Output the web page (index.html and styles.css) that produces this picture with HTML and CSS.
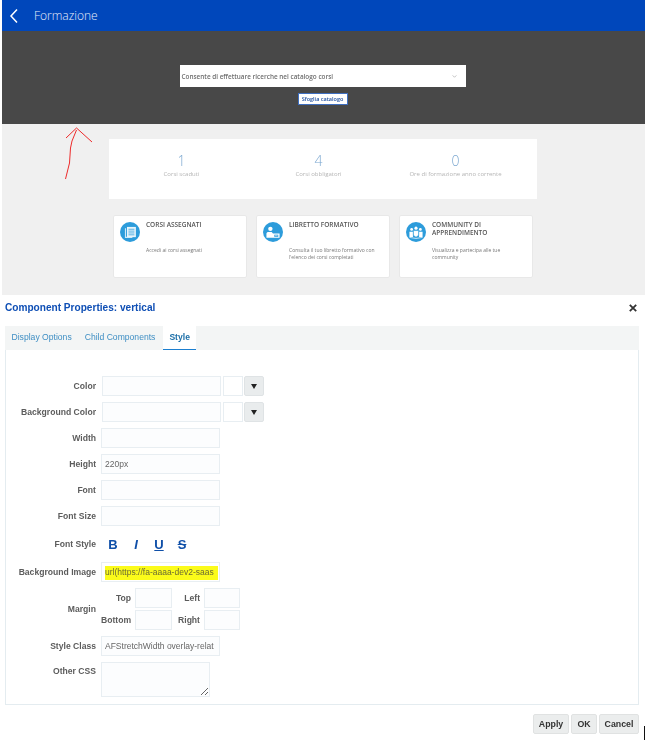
FILE: index.html
```html
<!DOCTYPE html>
<html lang="en">
<head>
  <meta charset="UTF-8">
  <title>Formazione - Component Properties</title>
  <meta name="viewport" content="width=device-width, initial-scale=1.0">
  <link rel="stylesheet" href="styles.css">
</head>
<body>
  <div class="page">
    <header class="topbar">
      <svg class="back" width="10" height="16" viewBox="0 0 10 16"><path d="M8 1.5 2 8l6 6.5" fill="none" stroke="#fff" stroke-width="1.5"/></svg>
      <span class="topbar-title">Formazione</span>
    </header>

    <section class="hero">
      <div class="search">
        <span>Consente di effettuare ricerche nel catalogo corsi</span>
        <svg width="5" height="3" viewBox="0 0 6 4"><path d="M.5.5 3 3 5.5.5" fill="none" stroke="#9a9a9a" stroke-width=".8"/></svg>
      </div>
      <button class="browse">Sfoglia catalogo</button>
    </section>

    <section class="home">
      <div class="stats">
        <div class="stat"><div class="stat-num">1</div><div class="stat-label">Corsi scaduti</div></div>
        <div class="stat"><div class="stat-num">4</div><div class="stat-label">Corsi obbligatori</div></div>
        <div class="stat"><div class="stat-num">0</div><div class="stat-label">Ore di formazione anno corrente</div></div>
      </div>
      <div class="tiles">
        <div class="tile">
          <div class="tile-icon">
            <svg width="13" height="13" viewBox="0 0 14 14"><path d="M1 2.500h1.200v9H9V13H1z" fill="#cfe8f7"/><rect x="3.200" y="1" width="9.600" height="11" fill="#e8f5fc"/><path d="M4.800 3.500h6.400M4.800 5.500h6.400M4.800 7.500h6.400M4.800 9.500h6.400" stroke="#2d9cdb" stroke-width=".8"/></svg>
          </div>
          <div>
            <h3>CORSI ASSEGNATI</h3>
            <p>Accedi ai corsi assegnati</p>
          </div>
        </div>
        <div class="tile">
          <div class="tile-icon">
            <svg width="14" height="13" viewBox="0 0 16 14"><circle cx="5" cy="2.800" r="2.500" fill="#fff"/><path d="M.5 13V8.500C.5 7 1.500 6.300 3 6.300h3.500L8 8h7.500v5z" fill="#fff"/><path d="M9.500 9.500H14V12H9.500z" fill="#2d9cdb"/><path d="M10.300 10.700h3" stroke="#fff" stroke-width=".7"/></svg>
          </div>
          <div>
            <h3>LIBRETTO FORMATIVO</h3>
            <p>Consulta il tuo libretto formativo con l'elenco dei corsi completati</p>
          </div>
        </div>
        <div class="tile">
          <div class="tile-icon">
            <svg width="14" height="13" viewBox="0 0 16 14"><circle cx="8" cy="2" r="1.800" fill="#fff"/><circle cx="3" cy="3.500" r="1.600" fill="#fff"/><circle cx="13" cy="3.500" r="1.600" fill="#fff"/><path d="M.5 6h4v6h-4zM11.500 6h4v6h-4z" fill="#fff"/><path d="M5 4.800h6v5.400l-3 2.300-3-2.300z" fill="#fff" stroke="#2d9cdb" stroke-width=".7"/><path d="M.5 12.600 8 13.800l7.500-1.200" fill="none" stroke="#fff" stroke-width=".8"/></svg>
          </div>
          <div>
            <h3>COMMUNITY DI APPRENDIMENTO</h3>
            <p>Visualizza e partecipa alle tue community</p>
          </div>
        </div>
      </div>
    </section>

    <section class="dialog">
      <div class="dialog-head">
        <h2>Component Properties: vertical</h2>
        <svg class="close" width="8" height="8" viewBox="0 0 8 8"><path d="M.8.800l6.400 6.400M7.200.800.8 7.200" stroke="#333" stroke-width="1.800"/></svg>
      </div>

      <nav class="tabs">
        <span class="tab">Display Options</span>
        <span class="tab">Child Components</span>
        <span class="tab tab-active">Style</span>
      </nav>

      <div class="panel">
        <div class="row row-color">
          <label>Color</label>
          <input class="field" type="text">
          <span class="swatch"></span>
          <span class="drop"><i></i></span>
        </div>
        <div class="row row-color">
          <label>Background Color</label>
          <input class="field" type="text">
          <span class="swatch"></span>
          <span class="drop"><i></i></span>
        </div>
        <div class="row"><label>Width</label><input class="field" type="text"></div>
        <div class="row"><label>Height</label><input class="field" type="text" value="220px"></div>
        <div class="row"><label>Font</label><input class="field" type="text"></div>
        <div class="row"><label>Font Size</label><input class="field" type="text"></div>
        <div class="row row-style">
          <label>Font Style</label>
          <div class="styles">
            <b class="st">B</b>
            <i class="st">I</i>
            <u class="st">U</u>
            <s class="st">S</s>
          </div>
        </div>
        <div class="row">
          <label>Background Image</label>
          <input class="field field-mark" type="text" value="url(https://fa-aaaa-dev2-saas">
        </div>
        <div class="row row-margin">
          <label>Margin</label>
          <div class="margins">
            <span class="m-label">Top</span><input class="small" type="text">
            <span class="m-label">Left</span><input class="small" type="text">
            <span class="m-label">Bottom</span><input class="small" type="text">
            <span class="m-label">Right</span><input class="small" type="text">
          </div>
        </div>
        <div class="row"><label>Style Class</label><input class="field" type="text" value="AFStretchWidth overlay-relat"></div>
        <div class="row row-area">
          <label>Other CSS</label>
          <textarea class="area"></textarea>
        </div>
      </div>

      <div class="actions">
        <button class="btn btn-apply">Apply</button>
        <button class="btn btn-ok">OK</button>
        <button class="btn btn-cancel">Cancel</button>
      </div>
    </section>
  </div>

  <!-- red pen arrow drawn over the screenshot -->
  <svg class="arrow" width="40" height="60" viewBox="0 0 40 60"><path d="M14.500 4 10 15 8.500 22 7.500 37 3.500 53M4 12 14.500 2 30 16" fill="none" stroke="#ee2b2b" stroke-width="1"/></svg>
  <span class="cursor"></span>
</body>
</html>
```

FILE: styles.css
```css
html, body {
  margin: 0;
  padding: 0;
  background: #fff;
}
body {
  position: relative;
  width: 645px;
  height: 747px;
  overflow: hidden;
  font-family: "Liberation Sans", Arial, sans-serif;
}
.page {
  margin-left: 2px;
}

/* top of the screenshot: the learning home page */
.topbar {
  height: 31px;
  background: #0047bb;
  display: flex;
  align-items: center;
  padding-left: 7px;
  font-family: "Open Sans", sans-serif;
}
.topbar-title {
  color: #e8eefa;
  font-size: 12px;
  font-weight: 300;
  margin-left: 15px;
}
.hero {
  height: 93px;
  background: #484848;
  display: flex;
  flex-direction: column;
  align-items: center;
  padding: 34px 2px 0 0;
  box-sizing: border-box;
  font-family: "Open Sans", sans-serif;
  filter: blur(.35px);
}
.search {
  width: 286px;
  height: 22px;
  background: #fff;
  box-sizing: border-box;
  padding: 0 9px 0 2px;
  display: flex;
  align-items: center;
  justify-content: space-between;
  font-size: 6.4px;
  font-weight: 600;
  color: #6e6e6e;
}
.browse {
  margin: 6px 0 0;
  padding: 0;
  width: 50px;
  height: 12px;
  background: #fff;
  border: 1px solid #3f6fc0;
  color: #1f4fa0;
  font-family: "Open Sans", sans-serif;
  font-size: 5.5px;
  font-weight: 600;
}
.home {
  height: 171px;
  background: #f0f0f0;
  padding-top: 15px;
  box-sizing: border-box;
  font-family: "Open Sans", sans-serif;
}
.stats {
  width: 428px;
  height: 60px;
  margin-left: 107px;
  background: #fff;
  display: flex;
  padding: 14px 0 0 4px;
  box-sizing: border-box;
  filter: blur(.3px);
}
.stat {
  flex: 0 0 137px;
  text-align: center;
}
.stat-num {
  color: #7ba7d0;
  font-size: 14px;
  font-weight: 300;
  line-height: 16px;
}
.stat-label {
  color: #b5b5b5;
  font-size: 6px;
  line-height: 11px;
}
.tiles {
  display: flex;
  gap: 9px;
  margin: 16px 0 0 111px;
}
.tile {
  width: 134px;
  height: 63px;
  background: #fff;
  border: 1px solid #e8e8e8;
  border-radius: 2px;
  box-sizing: border-box;
  display: flex;
  gap: 6px;
  padding: 6px 6px 0 6px;
  filter: blur(.3px);
}
.tile-icon {
  flex: none;
  width: 20px;
  height: 20px;
  border-radius: 50%;
  background: #2d9cdb;
  display: flex;
  align-items: center;
  justify-content: center;
}
.tile h3 {
  margin: -1px 0 0;
  height: 22px;
  font-size: 6.5px;
  line-height: 8px;
  font-weight: 600;
  color: #555;
}
.tile p {
  margin: 4px 0 0;
  font-size: 5px;
  line-height: 6.5px;
  color: #777;
}

/* bottom of the screenshot: the properties dialog */
.dialog {
  margin-left: 3px;
  filter: blur(.25px);
}
.dialog-head {
  display: flex;
  align-items: center;
  justify-content: space-between;
  height: 24px;
  padding: 1px 2px 0 0;
  width: 634px;
  box-sizing: border-box;
}
.dialog-head h2 {
  margin: 0;
  font-size: 10.1px;
  color: #0f4fb5;
}
.tabs {
  width: 634px;
  height: 24px;
  margin-top: 7px;
  background: #f3f5f5;
  display: flex;
  align-items: stretch;
  font-size: 8.6px;
  color: #3f8fc4;
}
.tab {
  display: flex;
  align-items: center;
  padding: 0 6.5px 2px;
}
.tab-active {
  margin-left: 1px;
  background: #fff;
  color: #1c6fa8;
  font-weight: 700;
  border-bottom: 1px solid #1c7fd0;
}
.panel {
  width: 634px;
  height: 355px;
  box-sizing: border-box;
  border: 1px solid #e4ecf0;
  border-top: none;
  padding-top: 23px;
}
.row {
  display: flex;
  align-items: center;
  height: 26px;
}
.row label {
  width: 90px;
  flex: none;
  margin-right: 5px;
  text-align: right;
  font-size: 8.6px;
  font-weight: 700;
  color: #5c5c5c;
}
input, textarea {
  border: 1px solid #e8eef2;
  background: #fcfdfe;
  box-sizing: border-box;
  padding: 0 3px;
  margin: 0;
  font-family: "Liberation Sans", Arial, sans-serif;
  color: #666;
}
.field {
  width: 119px;
  height: 20px;
  font-size: 8.5px;
}
.row-color .field {
  margin-left: 1px;
}
.swatch {
  width: 20px;
  height: 20px;
  margin-left: 2px;
  border: 1px solid #e8eef2;
  box-sizing: border-box;
}
.drop {
  width: 20px;
  height: 20px;
  margin-left: 1px;
  background: #e9eced;
  border: 1px solid #dfe3e5;
  border-radius: 2px;
  box-sizing: border-box;
  display: flex;
  align-items: center;
  justify-content: center;
}
.drop i {
  border-top: 5px solid #222;
  border-left: 3.5px solid transparent;
  border-right: 3.5px solid transparent;
}
.row-style {
  height: 30px;
}
.styles {
  display: flex;
  gap: 12px;
  margin-left: 6.5px;
  font-family: "Liberation Sans", Arial, sans-serif;
  font-size: 13px;
  color: #0f4fa8;
}
.st {
  width: 11px;
  text-align: center;
  font-weight: 700;
  font-style: normal;
}
i.st {
  font-style: italic;
}
.field-mark {
  background: linear-gradient(to bottom, transparent 14%, #fbfb1a 14%, #fbfb1a 92%, transparent 92%) no-repeat 3px 0 / 113px 100%;
  color: #6b6b33;
}
.row-margin {
  height: 42px;
  margin: 3px 0;
}
.margins {
  display: grid;
  grid-template-columns: 30px 37px 24px 36px;
  grid-auto-rows: 20px;
  gap: 2px 4px;
  align-items: center;
}
.m-label {
  text-align: right;
  font-size: 8.6px;
  font-weight: 700;
  color: #5c5c5c;
}
.small {
  width: 100%;
  height: 20px;
}
.row-area {
  align-items: flex-start;
  height: 36px;
  margin-top: 3px;
}
.row-area label {
  margin-top: 4px;
}
.area {
  width: 109px;
  height: 35px;
  resize: both;
}
.actions {
  width: 634px;
  display: flex;
  justify-content: flex-end;
  gap: 2px;
  margin-top: 9px;
}
.btn {
  height: 20px;
  padding: 0;
  background: #ebeded;
  border: 1px solid #e0e2e2;
  border-radius: 2px;
  font-family: "Liberation Sans", Arial, sans-serif;
  font-size: 8.8px;
  font-weight: 700;
  color: #333;
}
.btn-apply { width: 36px; }
.btn-ok { width: 26px; }
.btn-cancel { width: 40px; }

/* overlays */
.arrow {
  position: absolute;
  left: 62px;
  top: 126px;
}
.cursor {
  position: absolute;
  left: 644px;
  top: 726px;
  width: 1px;
  height: 14px;
  background: #111;
}
```
